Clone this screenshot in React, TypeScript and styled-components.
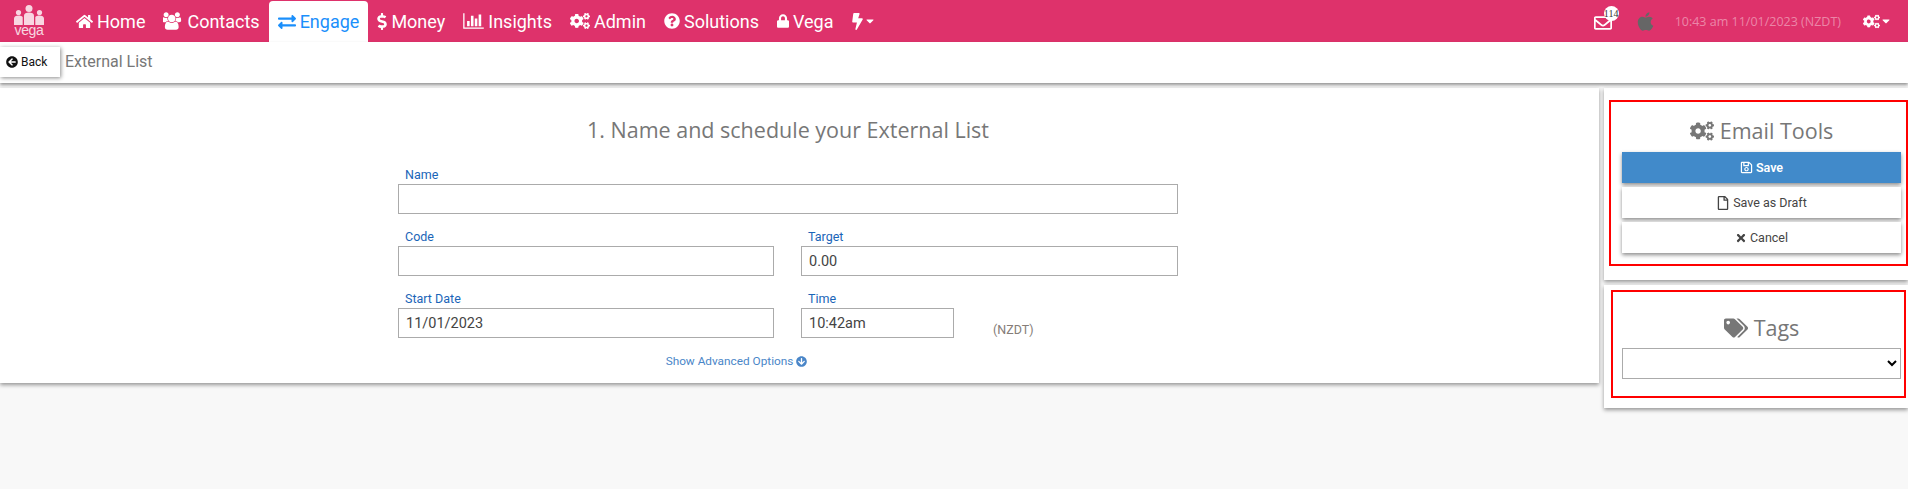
import React from "react";
import styled, { createGlobalStyle } from "styled-components";
import {
  FaHome,
  FaExchangeAlt,
  FaDollarSign,
  FaCogs,
  FaQuestionCircle,
  FaLock,
  FaBolt,
  FaCaretDown,
  FaRegEnvelope,
  FaApple,
  FaArrowCircleLeft,
  FaArrowCircleDown,
  FaRegSave,
  FaRegFile,
  FaTimes,
  FaTags,
} from "react-icons/fa";

const GlobalStyle = createGlobalStyle`
  html, body {
    margin: 0;
    padding: 0;
    background: #f8f8f8;
    font-family: Roboto, "Liberation Sans", sans-serif;
    overflow: hidden;
  }
  * { box-sizing: border-box; }
`;

const Page = styled.div`
  width: 1908px;
  height: 489px;
  display: flex;
  flex-direction: column;
`;

const NavBar = styled.header`
  height: 42px;
  background: #de326b;
  display: flex;
  align-items: stretch;
  padding-left: 14px;
  color: #fff;
`;

const Logo = styled.div`
  width: 30px;
  margin-right: 23px;
  display: flex;
  flex-direction: column;
  align-items: center;
  padding-top: 5px;
  opacity: 0.8;

  span {
    font: 500 14px/11px "Liberation Sans", sans-serif;
    letter-spacing: -0.4px;
  }
`;

const NavItem = styled.a<{ $active?: boolean }>`
  display: flex;
  align-items: center;
  gap: 4px;
  height: ${(p) => (p.$active ? "41px" : "42px")};
  margin-top: ${(p) => (p.$active ? "1px" : "0")};
  padding: 0 9px;
  font-size: 18px;
  color: ${(p) => (p.$active ? "#1b8ffb" : "#fff")};
  background: ${(p) => (p.$active ? "#fff" : "transparent")};
  border-radius: ${(p) => (p.$active ? "4px 4px 0 0" : "0")};
  white-space: nowrap;

  svg { flex: none; }
`;

const DollarIcon = styled(FaDollarSign)`
  width: 10px;
`;

const LockIcon = styled(FaLock)`
  width: 12px;
`;

const BoltIcon = styled(FaBolt)`
  width: 11px;
`;

const BoltIcons = styled.span`
  display: flex;
  align-items: center;
  gap: 1px;
`;

const NavRight = styled.div`
  margin-left: auto;
  display: flex;
  align-items: center;
  padding-right: 16px;
`;

const Mail = styled.div`
  position: relative;
  display: flex;
  margin: 3px 23px 0 0;
`;

const Badge = styled.span`
  position: absolute;
  left: 10px;
  top: -8px;
  width: 15px;
  height: 15px;
  border-radius: 50%;
  background: #fff;
  color: #333;
  font: 10px/15px "Liberation Serif", serif;
  text-align: center;
`;

const Clock = styled.span`
  margin: 0 22px 0 19px;
  font: 12.5px "Open Sans", sans-serif;
  color: rgba(255, 255, 255, 0.42);
`;

const SubBar = styled.div`
  height: 41px;
  padding-bottom: 2px;
  background: #fff;
  display: flex;
  align-items: center;
  gap: 5px;
  box-shadow: 0 2px 3px rgba(0, 0, 0, 0.4);
  position: relative;
`;

const BackButton = styled.button`
  width: 60px;
  height: 30px;
  border: 0;
  background: #fff;
  display: flex;
  align-items: center;
  gap: 3px;
  font: 12px Roboto, sans-serif;
  color: #111;
  box-shadow: 1px 1px 4px rgba(0, 0, 0, 0.45);
  padding: 0 0 0 6px;
`;

const PageTitle = styled.span`
  font-size: 16px;
  color: #777;
`;

const Content = styled.main`
  margin-top: 5px;
  display: flex;
  align-items: flex-start;
  gap: 5px;
`;

const MainPanel = styled.section`
  width: 1599px;
  height: 295px;
  background: #fff;
  box-shadow: 0 2px 4px rgba(0, 0, 0, 0.4);
  padding-top: 28px;
`;

const Heading = styled.h2`
  margin: 0;
  font: 400 21.5px/28px "Open Sans", sans-serif;
  color: #777;
  text-align: center;
  padding-right: 23px;
`;

const Form = styled.form`
  width: 780px;
  margin: 21px 0 0 398px;
  display: grid;
  grid-template-columns: 376px 377px;
  column-gap: 27px;
  row-gap: 13px;
`;

const Field = styled.div<{ $wide?: boolean }>`
  grid-column: ${(p) => (p.$wide ? "1 / -1" : "auto")};
  display: flex;
  flex-direction: column;
`;

const Label = styled.label`
  height: 19px;
  padding-left: 7px;
  font-size: 12.5px;
  line-height: 20px;
  color: #1a65b8;
`;

const Input = styled.input`
  height: 30px;
  width: 100%;
  border: 1px solid #ababab;
  border-radius: 0;
  padding: 0 7px;
  font: 14.5px Roboto, sans-serif;
  color: #444;
  background: #fff;
  outline: none;
`;

const TimeRow = styled.div`
  display: flex;
  align-items: flex-end;
`;

const TimeInput = styled(Input)`
  width: 153px;
`;

const Zone = styled.span`
  margin: 0 0 1px 39px;
  font-size: 12.5px;
  color: #857d78;
`;

const Advanced = styled.a`
  display: flex;
  justify-content: center;
  align-items: center;
  gap: 3px;
  padding-right: 126px;
  margin-top: 16px;
  font-size: 11.8px;
  line-height: 14px;
  color: #4a86c8;
`;

const Sidebar = styled.aside`
  width: 304px;
  display: flex;
  flex-direction: column;
  gap: 5px;
`;

const SidePanel = styled.section`
  background: #fff;
  box-shadow: 0 2px 4px rgba(0, 0, 0, 0.4);
`;

const ToolsBox = styled.div`
  margin: 12px 0 14px 5px;
  height: 166px;
  border: 2px solid #f00;
  padding: 15px 5px 0 11px;
  display: flex;
  flex-direction: column;
`;

const TagsBox = styled.div`
  margin: 5px 2px 10px 7px;
  height: 108px;
  border: 2px solid #f00;
  padding: 22px 3px 0 9px;
  display: flex;
  flex-direction: column;
`;

const BoxTitle = styled.h3`
  margin: 0;
  font: 400 21.5px/28px "Open Sans", sans-serif;
  color: #777;
  display: flex;
  justify-content: center;
  align-items: center;
  gap: 6px;
`;

const ActionButton = styled.button<{ $primary?: boolean }>`
  height: 31px;
  margin-top: ${(p) => (p.$primary ? "7px" : "4px")};
  border: 0;
  display: flex;
  align-items: center;
  justify-content: center;
  gap: 3px;
  padding: 0;
  font: ${(p) => (p.$primary ? "600" : "400")} 12.5px Roboto, sans-serif;
  background: ${(p) => (p.$primary ? "#418aca" : "#fff")};
  color: ${(p) => (p.$primary ? "#fff" : "#444")};
  box-shadow: 0 2px 4px rgba(0, 0, 0, 0.45);
`;

const TagSelect = styled.select`
  height: 31px;
  width: 100%;
  margin-top: 6px;
  border: 1px solid #ababab;
  border-radius: 0;
  background: #fff;
  outline: none;
`;

function UsersIcon() {
  return (
    <svg width="20" height="18" viewBox="0 0 2048 1792" fill="currentColor">
      <path d="M529 896q-162 5-265 128h-134q-82 0-138-40.500t-56-118.500q0-353 124-353 6 0 43.500 21t97.500 42.500 119 21.500q67 0 133-23-5 37-5 66 0 139 81 256zm1071 637q0 120-73 189.500t-194 69.500h-874q-121 0-194-69.500t-73-189.500q0-53 3.500-103.500t14-109 26.500-108.500 43-97.500 62-81 85.500-53.500 111.500-20q10 0 43 21.500t73 48 107 48 135 21.500 135-21.500 107-48 73-48 43-21.500q61 0 111.500 20t85.500 53.500 62 81 43 97.500 26.500 108.500 14 109 3.500 103.500zm-1024-1277q0 106-75 181t-181 75-181-75-75-181 75-181 181-75 181 75 75 181zm704 384q0 159-112.500 271.500t-271.500 112.500-271.500-112.500-112.500-271.500 112.500-271.500 271.500-112.500 271.500 112.500 112.500 271.500zm576 225q0 78-56 118.500t-138 40.500h-134q-103-123-265-128 81-117 81-256 0-29-5-66 66 23 133 23 59 0 119-21.500t97.500-42.500 43.500-21q124 0 124 353zm-128-609q0 106-75 181t-181 75-181-75-75-181 75-181 181-75 181 75 75 181z" />
    </svg>
  );
}

function BarChartIcon() {
  return (
    <svg width="21" height="18" viewBox="0 0 2048 1792" fill="currentColor">
      <path d="M640 896v512h-256v-512h256zm384-512v1024h-256v-1024h256zm1024 1152v128h-2048v-1536h128v1408h1920zm-640-896v768h-256v-768h256zm384-384v1152h-256v-1152h256z" />
    </svg>
  );
}

function VegaLogo() {
  return (
    <svg width="30" height="20" viewBox="0 0 30 20" fill="#fff">
      <circle cx="15" cy="3.500" r="3.500" />
      <circle cx="4.500" cy="7.500" r="2.600" />
      <circle cx="25.500" cy="7.500" r="2.600" />
      <path d="M10 20v-9.500c0-2 2.200-3 5-3s5 1 5 3V20z" />
      <path d="M0 20v-6.500c0-2 2-3 4.500-3 1.800 0 3.300.5 4.200 1.500V20z" />
      <path d="M30 20v-6.500c0-2-2-3-4.500-3-1.800 0-3.300.5-4.200 1.500V20z" />
    </svg>
  );
}

const navLinks = [
  { label: "Home", icon: <FaHome size={17} /> },
  { label: "Contacts", icon: <UsersIcon /> },
  { label: "Engage", icon: <FaExchangeAlt size={18} />, active: true },
  { label: "Money", icon: <DollarIcon size={17} /> },
  { label: "Insights", icon: <BarChartIcon /> },
  { label: "Admin", icon: <FaCogs size={20} /> },
  { label: "Solutions", icon: <FaQuestionCircle size={16} /> },
  { label: "Vega", icon: <LockIcon size={14} /> },
];

export default function App() {
  return (
    <Page>
      <GlobalStyle />
      <NavBar>
        <Logo>
          <VegaLogo />
          <span>vega</span>
        </Logo>
        {navLinks.map((link) => (
          <NavItem key={link.label} $active={link.active}>
            {link.icon}
            {link.label}
          </NavItem>
        ))}
        <NavItem>
          <BoltIcons>
            <BoltIcon size={17} />
            <FaCaretDown size={12} />
          </BoltIcons>
        </NavItem>
        <NavRight>
          <Mail>
            <FaRegEnvelope size={18} />
            <Badge>114</Badge>
          </Mail>
          <FaApple size={21} color="#666" />
          <Clock>10:43 am 11/01/2023 (NZDT)</Clock>
          <FaCogs size={17} />
          <FaCaretDown size={12} />
        </NavRight>
      </NavBar>
      <SubBar>
        <BackButton>
          <FaArrowCircleLeft size={12} />
          Back
        </BackButton>
        <PageTitle>External List</PageTitle>
      </SubBar>
      <Content>
        <MainPanel>
          <Heading>1. Name and schedule your External List</Heading>
          <Form>
            <Field $wide>
              <Label>Name</Label>
              <Input />
            </Field>
            <Field>
              <Label>Code</Label>
              <Input />
            </Field>
            <Field>
              <Label>Target</Label>
              <Input defaultValue="0.00" />
            </Field>
            <Field>
              <Label>Start Date</Label>
              <Input defaultValue="11/01/2023" />
            </Field>
            <Field>
              <Label>Time</Label>
              <TimeRow>
                <TimeInput defaultValue="10:42am" />
                <Zone>(NZDT)</Zone>
              </TimeRow>
            </Field>
          </Form>
          <Advanced>
            Show Advanced Options <FaArrowCircleDown size={11} />
          </Advanced>
        </MainPanel>
        <Sidebar>
          <SidePanel>
            <ToolsBox>
              <BoxTitle>
                <FaCogs size={24} />
                Email Tools
              </BoxTitle>
              <ActionButton $primary>
                <FaRegSave size={13} />
                Save
              </ActionButton>
              <ActionButton>
                <FaRegFile size={14} />
                Save as Draft
              </ActionButton>
              <ActionButton>
                <FaTimes size={12} />
                Cancel
              </ActionButton>
            </ToolsBox>
          </SidePanel>
          <SidePanel>
            <TagsBox>
              <BoxTitle>
                <FaTags size={24} />
                Tags
              </BoxTitle>
              <TagSelect />
            </TagsBox>
          </SidePanel>
        </Sidebar>
      </Content>
    </Page>
  );
}
